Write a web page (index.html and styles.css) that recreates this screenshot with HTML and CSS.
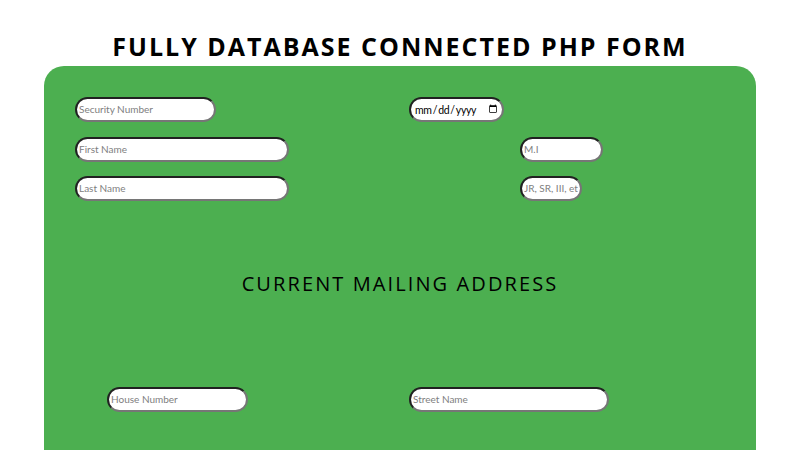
FILE: index.html
```html
<!DOCTYPE html>
<html lang="en">
<head>
  <meta charset="UTF-8">
  <title>Fully Database Connected PHP Form</title>
  <link rel="stylesheet" href="styles.css">
</head>
<body>

  <h1>FULLY DATABASE CONNECTED PHP FORM</h1>

  <form class="card">
    <div class="row row-first">
      <div class="col-ssn"><input class="w-141" type="text" placeholder="Security Number"></div>
      <input class="w-95" type="date">
    </div>

    <div class="row row-name">
      <div class="col-name"><input class="w-214" type="text" placeholder="First Name"></div>
      <input class="w-83" type="text" placeholder="M.I">
    </div>

    <div class="row row-name">
      <div class="col-name"><input class="w-214" type="text" placeholder="Last Name"></div>
      <input class="w-62" type="text" placeholder="JR, SR, III, etc">
    </div>

    <h2>CURRENT MAILING ADDRESS</h2>

    <div class="row row-address">
      <div class="col-house"><input class="w-141" type="text" placeholder="House Number"></div>
      <input class="w-200" type="text" placeholder="Street Name">
    </div>
  </form>

</body>
</html>
```

FILE: styles.css
```css
/* Page background and font */
html, body {
  margin: 0;
  padding: 0;
  height: 450px;
  overflow: hidden;
  background: #fff;
  font-family: "Open Sans", sans-serif;
  color: #000;
}

/* Main title */
h1 {
  margin: 0;
  padding-top: 27px;
  height: 39px;
  line-height: 38px;
  font-size: 25px;
  font-weight: 700;
  letter-spacing: 2px;
  text-align: center;
}

/* Green form card */
.card {
  box-sizing: border-box;
  width: 712px;
  height: 400px;
  margin: 0 auto 0 44px;
  padding-top: 31px;
  background: #4caf50;
  border-radius: 20px 20px 0 0;
}

.row {
  display: flex;
  align-items: flex-start;
  padding-left: 31px;
}
.row-first { margin-bottom: 15px; }
.row-name { margin-bottom: 14px; }
.row-address { padding-left: 63px; }

.col-ssn { width: 334px; }
.col-name { width: 445px; }
.col-house { width: 302px; }

/* Section heading */
h2 {
  margin: 68px 0 88px;
  height: 30px;
  line-height: 30px;
  font-size: 20px;
  font-weight: 400;
  letter-spacing: 2.1px;
  text-align: center;
}

/* Inputs keep the browser's inset border */
input {
  box-sizing: border-box;
  display: block;
  height: 25px;
  padding: 0 2px 1px;
  border: 2px inset #767676;
  border-radius: 12.5px;
  background: #fff;
  font-family: Lato, sans-serif;
  font-size: 10px;
}
input::placeholder { color: #808080; }
input[type="date"] { padding: 1px 2px 1px 3px; font-size: 10.5px; letter-spacing: -0.3px; }

.w-62 { width: 62px; }
.w-83 { width: 83px; }
.w-95 { width: 95px; }
.w-141 { width: 141px; }
.w-200 { width: 200px; }
.w-214 { width: 214px; }
```
